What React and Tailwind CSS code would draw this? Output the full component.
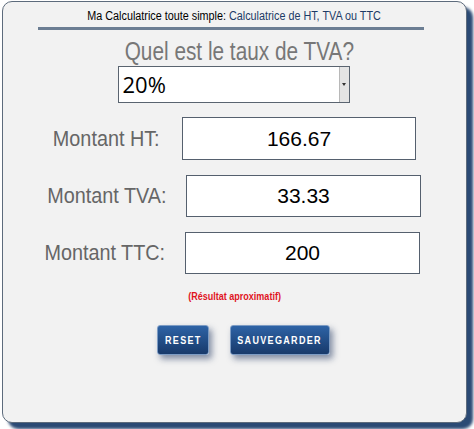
import React from "react";

export default function App() {
  const f = "font-['Liberation_Sans',Arial,sans-serif]";
  const field = `bg-white border border-[#55606e] flex items-center justify-center text-[21px] text-black ${f}`;
  const btn = `h-[30px] rounded-[3px] border border-[#7d9cc4] bg-gradient-to-b from-[#2e63a6] to-[#183a6b] shadow-[3px_4px_6px_rgba(40,60,100,0.55)] flex items-center justify-center text-white ${f}`;
  const btnText = "inline-block scale-x-[0.82] origin-center text-[11px] font-bold tracking-[1.6px] leading-none";
  const labelBox = "flex justify-end";
  const labelText = `inline-block scale-x-[0.9] origin-right text-[22px] leading-[28px] text-[#666666] whitespace-nowrap ${f}`;
  return (
    <div className="w-[474px] h-[429px] bg-white pt-[1px] pl-[2px]">
      <div className="w-[465px] h-[422px] rounded-[10px] border border-[#5d6b7c] bg-[#f2f2f2] shadow-[6px_6px_3px_#2b4a74] flex flex-col items-center">
        <div className={`mt-[7px] text-[12px] leading-[15px] text-black whitespace-nowrap inline-block scale-x-[0.9] origin-center ${f}`}>
          Ma Calculatrice toute simple: <span className="text-[#1d3b66]">Calculatrice de HT, TVA ou TTC</span>
        </div>
        <div className="mt-[3px] w-[386px] h-[3px] bg-[#6c7e93] -translate-x-[4px]" />
        <div className={`mt-[6px] text-[26px] leading-[30px] text-[#777777] whitespace-nowrap translate-x-[5px] scale-x-[0.8] origin-center ${f}`}>
          Quel est le taux de TVA?
        </div>
        <div className="mt-0 w-[232px] h-[37px] bg-white border border-[#5a6470] flex -translate-x-[1px]">
          <div className="flex-1 flex items-center pl-[4px] text-[22px] text-black font-['Open_Sans',sans-serif]">
            20%
          </div>
          <div className="w-[10px] bg-[#e4e4e4] border-l border-[#b8b8b8] flex items-center justify-center">
            <div className="w-0 h-0 border-l-[2px] border-r-[2px] border-t-[3px] border-l-transparent border-r-transparent border-t-[#333]" />
          </div>
        </div>

        <div className="mt-[14px] self-stretch flex flex-col gap-[15px]">
          <div className="flex items-center">
            <div className={`w-[157px] ${labelBox}`}><span className={labelText}>Montant HT:</span></div>
            <div className={`ml-[22px] w-[234px] h-[43px] ${field}`}>166.67</div>
          </div>
          <div className="flex items-center">
            <div className={`w-[163px] ${labelBox}`}><span className={labelText}>Montant TVA:</span></div>
            <div className={`ml-[20px] w-[235px] h-[42px] ${field}`}>33.33</div>
          </div>
          <div className="flex items-center">
            <div className={`w-[162px] ${labelBox}`}><span className={labelText}>Montant TTC:</span></div>
            <div className={`ml-[20px] w-[235px] h-[42px] ${field}`}>200</div>
          </div>
        </div>

        <div className={`mt-[15px] text-[11px] leading-[14px] font-bold text-[#e0141e] whitespace-nowrap scale-x-[0.82] origin-center ${f}`}>
          (Résultat aproximatif)
        </div>

        <div className="mt-[22px] flex gap-[21px] translate-x-[9px]">
          <div className={`w-[52px] ${btn}`}><span className={btnText}>RESET</span></div>
          <div className={`w-[100px] ${btn}`}><span className={btnText}>SAUVEGARDER</span></div>
        </div>
      </div>
    </div>
  );
}
